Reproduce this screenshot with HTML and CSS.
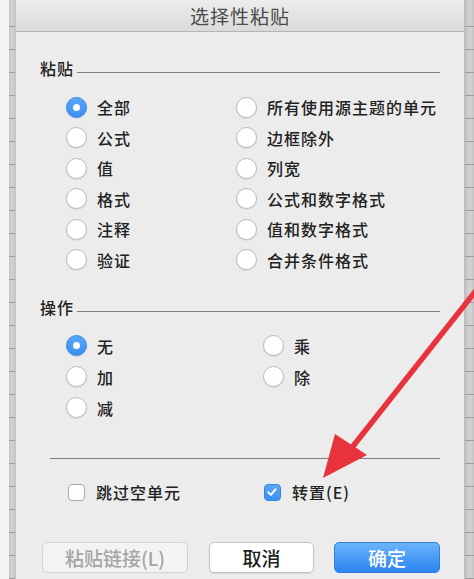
FILE: index.html
```html
<!DOCTYPE html>
<html lang="zh-CN">

<head>
    <meta charset="UTF-8">
    <meta name="viewport" content="width=device-width, initial-scale=1.0">
    <title>选择性粘贴</title>
    <link rel="stylesheet" href="styles.css">
</head>

<body>

    <div class="screen">
        <div class="sheet-edge left"><div class="ruler"></div></div>

        <div class="dialog">
            <div class="title-bar">选择性粘贴</div>

            <div class="dialog-body">
                <div class="group-header"><span>粘贴</span><div class="rule"></div></div>
                <div class="option-grid paste-options">
                    <div class="option"><span class="radio checked"></span>全部</div>
                    <div class="option"><span class="radio"></span>所有使用源主题的单元</div>
                    <div class="option"><span class="radio"></span>公式</div>
                    <div class="option"><span class="radio"></span>边框除外</div>
                    <div class="option"><span class="radio"></span>值</div>
                    <div class="option"><span class="radio"></span>列宽</div>
                    <div class="option"><span class="radio"></span>格式</div>
                    <div class="option"><span class="radio"></span>公式和数字格式</div>
                    <div class="option"><span class="radio"></span>注释</div>
                    <div class="option"><span class="radio"></span>值和数字格式</div>
                    <div class="option"><span class="radio"></span>验证</div>
                    <div class="option"><span class="radio"></span>合并条件格式</div>
                </div>

                <div class="group-header ops-header"><span>操作</span><div class="rule"></div></div>
                <div class="option-grid op-options">
                    <div class="option"><span class="radio checked"></span>无</div>
                    <div class="option"><span class="radio"></span>乘</div>
                    <div class="option"><span class="radio"></span>加</div>
                    <div class="option"><span class="radio"></span>除</div>
                    <div class="option"><span class="radio"></span>减</div>
                </div>

                <div class="separator"></div>

                <div class="check-row">
                    <div class="option"><span class="checkbox"></span>跳过空单元</div>
                    <div class="option">
                        <span class="checkbox checked">
                            <svg width="16" height="16" viewBox="0 0 16 16"><polyline points="4.2,8.3 6.9,10.9 11.6,5.2" fill="none" stroke="#fff" stroke-width="1.9" stroke-linecap="round" stroke-linejoin="round"/></svg>
                        </span>转置(E)
                    </div>
                </div>

                <div class="button-row">
                    <button class="btn link" disabled>粘贴链接(L)</button>
                    <button class="btn cancel">取消</button>
                    <button class="btn ok">确定</button>
                </div>
            </div>
        </div>

        <div class="sheet-edge right"><div class="ruler"></div></div>

        <svg class="arrow" width="474" height="579" viewBox="0 0 474 579">
            <line x1="478" y1="288" x2="350" y2="450" stroke="#e8333c" stroke-width="5.5" stroke-linecap="round"/>
            <polygon points="323,478 335,434 367,455" fill="#e8333c"/>
        </svg>
    </div>

</body>

</html>
```

FILE: styles.css
```css
body {
    margin: 0;
    background: #ececec;
    font-family: 'Noto Sans CJK SC', 'Noto Sans', sans-serif;
    color: #222222;
}

.screen {
    position: relative;
    display: flex;
    width: 474px;
    height: 579px;
    overflow: hidden;
}

.sheet-edge {
    flex: none;
    display: flex;
}

.sheet-edge.left {
    width: 15px;
    background: #f4f4f4;
    justify-content: flex-end;
}

.sheet-edge.left .ruler {
    width: 6px;
}

.sheet-edge.right {
    width: 10px;
}

.sheet-edge.right .ruler {
    width: 10px;
}

.ruler {
    height: 100%;
    background:
        repeating-linear-gradient(to bottom, transparent 0 22px, #9c9c9c 22px 23px),
        linear-gradient(to right, #c2c2c2, #d4d4d4 50%, #c2c2c2);
    background-position: 0 4px, 0 0;
}

.dialog {
    flex: 1;
    display: flex;
    flex-direction: column;
    background: #ececec;
    border-left: 1px solid #c9c9c9;
    border-right: 1px solid #bdbdbd;
}

.title-bar {
    height: 31px;
    flex: none;
    display: flex;
    align-items: center;
    justify-content: center;
    font-size: 19px;
    letter-spacing: 1px;
    color: #4a4a4a;
    background: linear-gradient(#ededed, #dadada);
    border-bottom: 1px solid #b4b4b4;
}

.dialog-body {
    padding: 26px 24px 0 24px;
}

.group-header {
    display: flex;
    align-items: center;
    height: 20px;
    font-size: 16px;
    font-weight: 500;
    letter-spacing: 1px;
}

.group-header .rule {
    flex: 1;
    margin-left: 3px;
    margin-top: 9px;
    border-bottom: 1px solid #7e7e7e;
}

.ops-header {
    margin-top: 22px;
}

.option-grid {
    display: grid;
    margin-left: 26px;
}

.paste-options {
    margin-top: 14px;
    grid-template-columns: 170px 1fr;
    grid-auto-rows: 30.5px;
}

.op-options {
    margin-top: 13px;
    grid-template-columns: 197px 1fr;
    grid-auto-rows: 31px;
}

.option {
    display: flex;
    align-items: center;
    font-size: 16px;
    font-weight: 500;
    letter-spacing: 1px;
    white-space: nowrap;
}

.radio {
    flex: none;
    width: 19px;
    height: 19px;
    margin-right: 10px;
    border-radius: 50%;
    background: #ffffff;
    border: 1px solid #b9b9b9;
    box-shadow: 0 1px 1px rgba(0, 0, 0, 0.08);
    display: flex;
    align-items: center;
    justify-content: center;
}

.radio.checked {
    background: linear-gradient(#5aa7f8, #3a8ff0);
    border-color: #3683e0;
}

.radio.checked::after {
    content: '';
    width: 7px;
    height: 7px;
    border-radius: 50%;
    background: #ffffff;
}

.separator {
    margin: 35px 0 0 10px;
    border-bottom: 1px solid #7e7e7e;
}

.check-row {
    display: grid;
    grid-template-columns: 196px 1fr;
    height: 30px;
    margin: 18px 0 0 28px;
}

.checkbox {
    flex: none;
    width: 15px;
    height: 15px;
    margin-right: 11px;
    border-radius: 4px;
    background: #ffffff;
    border: 1px solid #a9a9a9;
    display: flex;
}

.checkbox.checked {
    background: linear-gradient(#5aa7f8, #3a8ff0);
    border-color: #3683e0;
}

.checkbox svg {
    margin: -1px;
}

.button-row {
    display: flex;
    margin: 35px 0 0 2px;
}

.btn {
    height: 31px;
    font-family: inherit;
    font-size: 19px;
    font-weight: 500;
    border-radius: 5px;
    padding: 0;
    line-height: 1;
}

.btn.link {
    width: 146px;
    background: #f3f3f3;
    border: 1px solid #d2d2d2;
    color: #a5a5a5;
}

.btn.cancel {
    width: 105px;
    margin-left: 21px;
    background: #ffffff;
    border: 1px solid #c3c3c3;
    color: #1e1e1e;
    box-shadow: 0 1px 1px rgba(0, 0, 0, 0.08);
}

.btn.ok {
    width: 106px;
    margin-left: 20px;
    background: linear-gradient(#6ab4fb, #2b84f0);
    border: 1px solid #2d7ee0;
    color: #ffffff;
}

.arrow {
    position: absolute;
    left: 0;
    top: 0;
    pointer-events: none;
}
```
